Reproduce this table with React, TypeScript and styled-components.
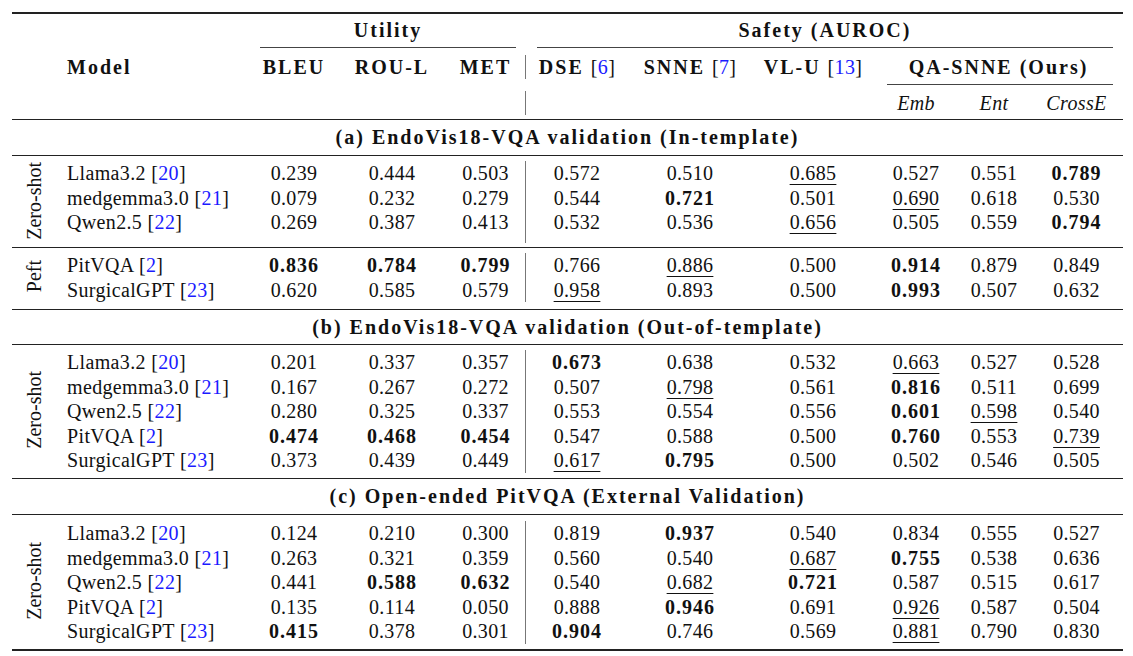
import React from "react";
import styled, { createGlobalStyle } from "styled-components";

const GlobalStyle = createGlobalStyle`
  body {
    margin: 0;
    background: #fff;
    font-family: "Liberation Serif", serif;
  }
`;

// column widths, left to right: group label, model, 3 utility, 6 safety
const COLS = [40, 198, 88, 108, 79, 103, 124, 122, 84, 72, 93];
const ROW_H = 24.5;

type Row = { name: string; cite: string; vals: string[] };
type Block = { label: string; rows: Row[]; tail?: number; after: number };
type Section = { title: string; titleH: number; lead: number; blocks: Block[] };

const sections: Section[] = [
  {
    title: "(a) EndoVis18-VQA validation (In-template)",
    titleH: 35,
    lead: 5,
    blocks: [
      {
        label: "Zero-shot",
        tail: 8.5,
        after: 4,
        rows: [
          { name: "Llama3.2", cite: "20", vals: ["0.239", "0.444", "0.503", "0.572", "0.510", "_0.685", "0.527", "0.551", "*0.789"] },
          { name: "medgemma3.0", cite: "21", vals: ["0.079", "0.232", "0.279", "0.544", "*0.721", "0.501", "_0.690", "0.618", "0.530"] },
          { name: "Qwen2.5", cite: "22", vals: ["0.269", "0.387", "0.413", "0.532", "0.536", "_0.656", "0.505", "0.559", "*0.794"] },
        ],
      },
      {
        label: "Peft",
        after: 7,
        rows: [
          { name: "PitVQA", cite: "2", vals: ["*0.836", "*0.784", "*0.799", "0.766", "_0.886", "0.500", "*0.914", "0.879", "0.849"] },
          { name: "SurgicalGPT", cite: "23", vals: ["0.620", "0.585", "0.579", "_0.958", "0.893", "0.500", "*0.993", "0.507", "0.632"] },
        ],
      },
    ],
  },
  {
    title: "(b) EndoVis18-VQA validation (Out-of-template)",
    titleH: 34,
    lead: 5,
    blocks: [
      {
        label: "Zero-shot",
        after: 5.5,
        rows: [
          { name: "Llama3.2", cite: "20", vals: ["0.201", "0.337", "0.357", "*0.673", "0.638", "0.532", "_0.663", "0.527", "0.528"] },
          { name: "medgemma3.0", cite: "21", vals: ["0.167", "0.267", "0.272", "0.507", "_0.798", "0.561", "*0.816", "0.511", "0.699"] },
          { name: "Qwen2.5", cite: "22", vals: ["0.280", "0.325", "0.337", "0.553", "0.554", "0.556", "*0.601", "_0.598", "0.540"] },
          { name: "PitVQA", cite: "2", vals: ["*0.474", "*0.468", "*0.454", "0.547", "0.588", "0.500", "*0.760", "0.553", "_0.739"] },
          { name: "SurgicalGPT", cite: "23", vals: ["0.373", "0.439", "0.449", "_0.617", "*0.795", "0.500", "0.502", "0.546", "0.505"] },
        ],
      },
    ],
  },
  {
    title: "(c) Open-ended PitVQA (External Validation)",
    titleH: 35,
    lead: 6,
    blocks: [
      {
        label: "Zero-shot",
        after: 5,
        rows: [
          { name: "Llama3.2", cite: "20", vals: ["0.124", "0.210", "0.300", "0.819", "*0.937", "0.540", "0.834", "0.555", "0.527"] },
          { name: "medgemma3.0", cite: "21", vals: ["0.263", "0.321", "0.359", "0.560", "0.540", "_0.687", "*0.755", "0.538", "0.636"] },
          { name: "Qwen2.5", cite: "22", vals: ["0.441", "*0.588", "*0.632", "0.540", "_0.682", "*0.721", "0.587", "0.515", "0.617"] },
          { name: "PitVQA", cite: "2", vals: ["0.135", "0.114", "0.050", "0.888", "*0.946", "0.691", "_0.926", "0.587", "0.504"] },
          { name: "SurgicalGPT", cite: "23", vals: ["*0.415", "0.378", "0.301", "*0.904", "0.746", "0.569", "_0.881", "0.790", "0.830"] },
        ],
      },
    ],
  },
];

const Page = styled.div`
  padding: 12px 0 0 12px;
`;

const Table = styled.table`
  width: 1111px;
  table-layout: fixed;
  border-collapse: separate;
  border-spacing: 0;
  font-family: "Liberation Serif", serif;
  font-size: 20px;
  color: #111;
  letter-spacing: 0.35px;

  td,
  th {
    padding: 0;
  }
`;

const Col = styled.col<{ $w: number }>`
  width: ${(p) => p.$w}px;
`;

const RuleCell = styled.td<{ $h: number }>`
  height: ${(p) => p.$h}px;
  background: #222;
  font-size: 0;
  line-height: 0;
`;

const GapCell = styled.td<{ $h: number }>`
  height: ${(p) => p.$h}px;
  font-size: 0;
  line-height: 0;
  vertical-align: top;
`;

const SubRule = styled.div`
  margin: 5px 10px 0 13px;
  border-top: 1px solid #444;
`;

const GroupHead = styled.th<{ $pl: number; $pr: number }>`
  padding: 0 ${(p) => p.$pr}px 0 ${(p) => p.$pl}px !important;
  vertical-align: top;
`;

const GroupTitle = styled.div`
  height: 33px;
  line-height: 33px;
  border-bottom: 1px solid #444;
  text-align: center;
  font-weight: 700;
  letter-spacing: 2px;
`;

const ColHead = styled.th<{ $bar?: boolean; $left?: boolean }>`
  height: 24px;
  line-height: 24px;
  vertical-align: middle;
  font-weight: 700;
  letter-spacing: 2px;
  white-space: nowrap;
  text-align: ${(p) => (p.$left ? "left" : "center")};
  padding-left: ${(p) => (p.$left ? "15px" : "0")} !important;
  border-left: ${(p) => (p.$bar ? "1px solid #777" : "none")};
`;

const SubHead = styled.th<{ $bar?: boolean }>`
  height: 24px;
  line-height: 24px;
  font-weight: 400;
  font-style: italic;
  text-align: center;
  border-left: ${(p) => (p.$bar ? "1px solid #777" : "none")};
`;

const Cite = styled.span`
  font-weight: 400;
  letter-spacing: 0.35px;
`;

const Ref = styled.span`
  color: #1a1aff;
`;

const SectionTitle = styled.td<{ $h: number }>`
  height: ${(p) => p.$h}px;
  text-align: center;
  vertical-align: middle;
  font-weight: 700;
  letter-spacing: 2px;
  white-space: nowrap;
`;

const LabelCell = styled.td`
  vertical-align: middle;
  text-align: center;
  padding-left: 4px !important;
  line-height: 20px;
`;

const LabelText = styled.span`
  display: inline-block;
  writing-mode: vertical-rl;
  transform: rotate(180deg);
  letter-spacing: 0;
  white-space: nowrap;
`;

const NameCell = styled.td<{ $h: number }>`
  height: ${(p) => p.$h}px;
  line-height: ${ROW_H}px;
  vertical-align: top;
  padding-left: 15px !important;
  white-space: nowrap;
`;

const NumCell = styled.td<{ $h: number; $bar?: boolean }>`
  height: ${(p) => p.$h}px;
  line-height: ${ROW_H}px;
  vertical-align: top;
  text-align: center;
  white-space: nowrap;
  border-left: ${(p) => (p.$bar ? "1px solid #777" : "none")};
`;

const Best = styled.span`
  font-weight: 700;
  letter-spacing: 1px;
`;

const Second = styled.span`
  text-decoration: underline;
  text-decoration-thickness: 1px;
  text-underline-offset: 4px;
`;

function Rule({ h }: { h: number }) {
  return (
    <tr>
      <RuleCell colSpan={11} $h={h} />
    </tr>
  );
}

function Gap({ h }: { h: number }) {
  return (
    <tr>
      <GapCell colSpan={11} $h={h} />
    </tr>
  );
}

function CiteRef({ n }: { n: string }) {
  return (
    <Cite>
      [<Ref>{n}</Ref>]
    </Cite>
  );
}

function Value({ v }: { v: string }) {
  if (v.startsWith("*")) return <Best>{v.slice(1)}</Best>;
  if (v.startsWith("_")) return <Second>{v.slice(1)}</Second>;
  return <>{v}</>;
}

function BlockRows({ block }: { block: Block }) {
  return (
    <>
      {block.rows.map((r, i) => {
        const last = i === block.rows.length - 1;
        const h = ROW_H + (last && block.tail ? block.tail : 0);
        return (
          <tr key={r.name}>
            {i === 0 && (
              <LabelCell rowSpan={block.rows.length}>
                <LabelText>{block.label}</LabelText>
              </LabelCell>
            )}
            <NameCell $h={h}>
              {r.name} <CiteRef n={r.cite} />
            </NameCell>
            {r.vals.map((v, j) => (
              <NumCell key={j} $h={h} $bar={j === 3}>
                <Value v={v} />
              </NumCell>
            ))}
          </tr>
        );
      })}
    </>
  );
}

export default function App() {
  return (
    <Page>
      <GlobalStyle />
      <Table>
        <colgroup>
          {COLS.map((w, i) => (
            <Col key={i} $w={w} />
          ))}
        </colgroup>
        <thead>
          <Rule h={2} />
          <tr>
            <th />
            <th />
            <GroupHead colSpan={3} $pl={10} $pr={9}>
              <GroupTitle>Utility</GroupTitle>
            </GroupHead>
            <GroupHead colSpan={6} $pl={12} $pr={10}>
              <GroupTitle>Safety (AUROC)</GroupTitle>
            </GroupHead>
          </tr>
          <Gap h={7} />
          <tr>
            <th />
            <ColHead $left>Model</ColHead>
            <ColHead>BLEU</ColHead>
            <ColHead>ROU-L</ColHead>
            <ColHead>MET</ColHead>
            <ColHead $bar>
              DSE <CiteRef n="6" />
            </ColHead>
            <ColHead>
              SNNE <CiteRef n="7" />
            </ColHead>
            <ColHead>
              VL-U <CiteRef n="13" />
            </ColHead>
            <ColHead colSpan={3}>QA-SNNE (Ours)</ColHead>
          </tr>
          <tr>
            <GapCell colSpan={8} $h={12} />
            <GapCell colSpan={3} $h={12}>
              <SubRule />
            </GapCell>
          </tr>
          <tr>
            <th />
            <th />
            <th />
            <th />
            <th />
            <SubHead $bar />
            <th />
            <th />
            <SubHead>Emb</SubHead>
            <SubHead>Ent</SubHead>
            <SubHead>CrossE</SubHead>
          </tr>
          <Gap h={4} />
          <Rule h={1} />
        </thead>
        {sections.map((s, si) => (
          <tbody key={s.title}>
            {si > 0 && <Rule h={1} />}
            <tr>
              <SectionTitle colSpan={11} $h={s.titleH}>
                {s.title}
              </SectionTitle>
            </tr>
            <Rule h={1} />
            {s.blocks.map((b, bi) => (
              <React.Fragment key={b.label + bi}>
                {bi > 0 && <Rule h={1} />}
                <Gap h={bi === 0 ? s.lead : 5} />
                <BlockRows block={b} />
                <Gap h={b.after} />
              </React.Fragment>
            ))}
          </tbody>
        ))}
        <tfoot>
          <Rule h={2} />
        </tfoot>
      </Table>
    </Page>
  );
}
